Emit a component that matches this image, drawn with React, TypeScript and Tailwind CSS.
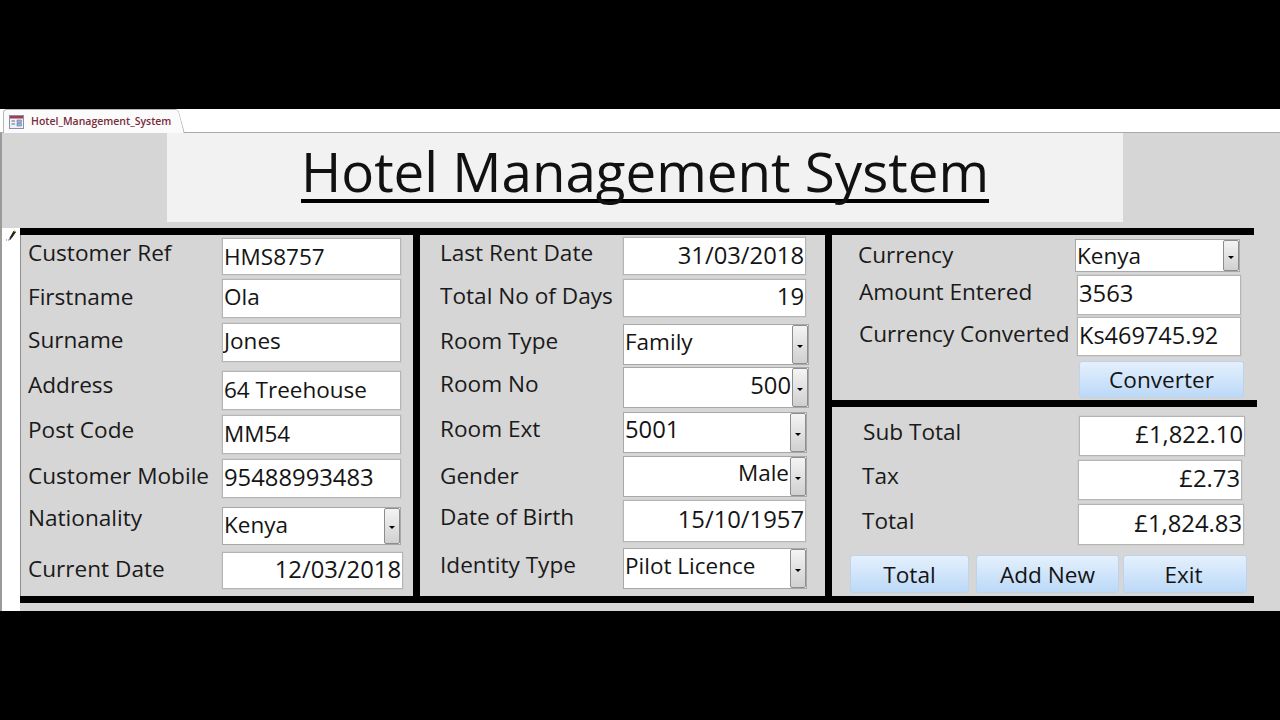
import type { ReactNode } from "react";
import clsx from "clsx";

const FONT = "[font-family:'Open_Sans','Noto_Sans',sans-serif]";

interface BoxProps {
  value: string;
  right?: boolean;
  className: string;
  textClass?: string;
}

function TextBox({ value, right, className }: BoxProps) {
  return (
    <div
      className={clsx(
        "flex items-center bg-white border border-[#b5b5b5] outline outline-[#cfcfcf] text-[#141414] whitespace-nowrap overflow-hidden px-[1px]",
        right && "justify-end",
        className
      )}
    >
      {value}
    </div>
  );
}

function Combo({ value, right, className, textClass }: BoxProps) {
  return (
    <div
      className={clsx(
        "flex items-stretch bg-white border border-[#a8a8a8] text-[#141414] whitespace-nowrap",
        className
      )}
    >
      <div className={clsx("flex-1 flex items-center px-[1px]", right && "justify-end", textClass)}>{value}</div>
      <div className="w-[16px] shrink-0 flex items-center justify-center border border-[#8d8d8d] rounded-[2px] bg-gradient-to-b from-[#f4f4f4] to-[#d0d0d0]">
        <div className="w-0 h-0 border-x-[3px] border-x-transparent border-t-[3px] border-t-black mt-[3px]" />
      </div>
    </div>
  );
}

function Label({ text, className }: { text: string; className: string }) {
  return <div className={clsx("text-[22.6px] leading-[30px] text-[#1a1a1a] whitespace-nowrap", className)}>{text}</div>;
}

function Row({ className, children }: { className: string; children: ReactNode }) {
  return <div className={clsx("flex items-start", className)}>{children}</div>;
}

function FormButton({ text, className }: { text: string; className: string }) {
  return (
    <div
      className={clsx(
        "flex items-center justify-center rounded-[3px] border border-[#bcd3ea] bg-gradient-to-b from-[#e4f0fd] to-[#bcd9f7] text-[22.6px] text-[#141414] pt-[1px]",
        className
      )}
    >
      {text}
    </div>
  );
}

function TabIcon() {
  return (
    <svg width="15" height="14" viewBox="0 0 15 14" className="shrink-0">
      <rect x="0.5" y="0.5" width="14" height="13" fill="#eef0f6" stroke="#8a8fa8" />
      <rect x="1" y="1" width="13" height="2.5" fill="#a63a4e" />
      <rect x="2.5" y="5.5" width="3.5" height="1" fill="#5a6a9a" />
      <rect x="2.5" y="8.5" width="3.5" height="1" fill="#5a6a9a" />
      <rect x="8" y="5" width="4.5" height="2.5" fill="#9db2d6" stroke="#5a6a9a" strokeWidth="0.5" />
      <rect x="8" y="8.5" width="4.5" height="2.5" fill="#9db2d6" stroke="#5a6a9a" strokeWidth="0.5" />
    </svg>
  );
}

function Pencil() {
  return (
    <svg width="12" height="12" viewBox="0 0 12 12" className="ml-[3px] mt-[1px]">
      <path d="M6 9.5 L4.8 10.6 L5.2 8.6 L9 2 L10.6 3 Z" fill="#222" stroke="#222" strokeWidth="1" />
      <path d="M9 2 L10.6 3" stroke="#c9a227" strokeWidth="1.4" />
      <path d="M1 11h0.8M3 11h0.8" stroke="#555" strokeWidth="1" />
    </svg>
  );
}

const TXT = "text-[22.5px]";
const NUM = "text-[23.8px]";

export default function App() {
  return (
    <div className={clsx("w-[1280px] h-[720px] bg-black flex flex-col overflow-hidden", FONT)}>
      <div className="h-[109px] shrink-0" />
      <div className="h-[502px] shrink-0 bg-[#d6d6d6] flex flex-col">
        {/* tab strip */}
        <div className="h-[24px] shrink-0 bg-white border-b border-[#a9a9a9] flex items-end pl-[3px]">
          <div className="relative h-[24px] w-[172px] bg-[#fbfbfb] border-t border-l border-[#b5b5b5] rounded-tl-[4px] flex items-center gap-[7px] pl-[5px] -mb-[1px]">
            <TabIcon />
            <span className="text-[10.5px] font-semibold text-[#7a2b3c] whitespace-nowrap">Hotel_Management_System</span>
            <svg width="10" height="24" viewBox="0 0 10 24" className="absolute left-full top-[-1px]">
              <path d="M0 0.5 C3 0.5 3 2 4 5 L9 23.5" fill="none" stroke="#b0b0b0" />
              <path d="M0 1 C3 1 3 2 4 5 L8.6 24 L0 24 Z" fill="#fbfbfb" />
            </svg>
          </div>
        </div>

        {/* title band */}
        <div className="h-[95px] shrink-0 flex items-stretch border-l-2 border-[#9a9a9a]">
          <div className="w-[165px] shrink-0" />
          <div className="w-[956px] h-[89px] bg-[#f2f2f2] flex justify-center">
            <span className="text-[54.7px] leading-[77px] h-[70px] text-[#111] border-b-[4px] border-black whitespace-nowrap">
              Hotel Management System
            </span>
          </div>
        </div>

        {/* form body */}
        <div className="flex-1 flex min-h-0">
          <div className="w-[20px] shrink-0 bg-white border-l-2 border-[#9a9a9a]">
            <Pencil />
          </div>
          <div className="w-[1234px] shrink-0 flex flex-col">
            <div className="h-[7px] bg-black" />
            <div className="h-[361px] flex border-l border-[#8f8f8f]">
              {/* customer column */}
              <div className="w-[392px] shrink-0 pl-[7px]">
                <Row className="mt-[3px]">
                  <Label text="Customer Ref" className="w-[194px]" />
                  <TextBox value="HMS8757" className={clsx("w-[179px] h-[37px]", TXT)} />
                </Row>
                <Row className="mt-[4px]">
                  <Label text="Firstname" className="w-[194px] mt-[3px]" />
                  <TextBox value="Ola" className={clsx("w-[179px] h-[39px] pb-[3px]", TXT)} />
                </Row>
                <Row className="mt-[5px]">
                  <Label text="Surname" className="w-[194px] mt-[2px]" />
                  <TextBox value="Jones" className={clsx("w-[179px] h-[39px] pb-[3px]", TXT)} />
                </Row>
                <Row className="mt-[9px]">
                  <Label text="Address" className="w-[194px] -mt-[1px]" />
                  <TextBox value="64 Treehouse" className={clsx("w-[179px] h-[39px] pb-[2px]", TXT)} />
                </Row>
                <Row className="mt-[5px]">
                  <Label text="Post Code" className="w-[194px]" />
                  <TextBox value="MM54" className={clsx("w-[179px] h-[39px] pb-[2px]", TXT)} />
                </Row>
                <Row className="mt-[5px]">
                  <Label text="Customer Mobile" className="w-[194px] mt-[2px]" />
                  <TextBox value="95488993483" className={clsx("w-[179px] h-[39px] pb-[2px]", NUM)} />
                </Row>
                <Row className="mt-[9px]">
                  <Label text="Nationality" className="w-[194px] -mt-[4px]" />
                  <Combo value="Kenya" textClass="pb-[2px]" className={clsx("w-[179px] h-[38px]", TXT)} />
                </Row>
                <Row className="mt-[7px]">
                  <Label text="Current Date" className="w-[194px] mt-[2px]" />
                  <TextBox value="12/03/2018" right className={clsx("w-[181px] h-[37px] pb-[2px]", NUM)} />
                </Row>
              </div>
              <div className="w-[7px] shrink-0 bg-black" />

              {/* booking column */}
              <div className="w-[405px] shrink-0 pl-[20px]">
                <Row className="mt-[2px]">
                  <Label text="Last Rent Date" className="w-[183px] mt-[1px]" />
                  <TextBox value="31/03/2018" right className={clsx("w-[183px] h-[38px] pb-[1px]", NUM)} />
                </Row>
                <Row className="mt-[4px]">
                  <Label text="Total No of Days" className="w-[183px] mt-[2px]" />
                  <TextBox value="19" right className={clsx("w-[183px] h-[38px] pb-[2px]", NUM)} />
                </Row>
                <Row className="mt-[7px]">
                  <Label text="Room Type" className="w-[183px] mt-[2px]" />
                  <Combo value="Family" textClass="pb-[5px]" className={clsx("w-[186px] h-[41px]", TXT)} />
                </Row>
                <Row className="mt-[2px]">
                  <Label text="Room No" className="w-[183px] mt-[2px]" />
                  <Combo value="500" right textClass="pb-[3px]" className={clsx("w-[186px] h-[41px]", NUM)} />
                </Row>
                <Row className="mt-[4px]">
                  <Label text="Room Ext" className="w-[183px] mt-[2px]" />
                  <Combo value="5001" textClass="pb-[6px]" className={clsx("w-[184px] h-[41px]", NUM)} />
                </Row>
                <Row className="mt-[3px]">
                  <Label text="Gender" className="w-[183px] mt-[5px]" />
                  <Combo value="Male" right textClass="pb-[7px]" className={clsx("w-[184px] h-[41px]", TXT)} />
                </Row>
                <Row className="mt-[3px]">
                  <Label text="Date of Birth" className="w-[183px] mt-[2px]" />
                  <TextBox value="15/10/1957" right className={clsx("w-[183px] h-[42px] pb-[2px]", NUM)} />
                </Row>
                <Row className="mt-[6px]">
                  <Label text="Identity Type" className="w-[183px] mt-[2px]" />
                  <Combo value="Pilot Licence" textClass="pb-[6px]" className={clsx("w-[184px] h-[41px]", TXT)} />
                </Row>
              </div>
              <div className="w-[7px] shrink-0 bg-black" />

              {/* currency and totals */}
              <div className="flex-1 flex flex-col min-w-0">
                <div className="h-[165px] shrink-0 pl-[26px]">
                  <Row className="mt-[4px]">
                    <Label text="Currency" className="w-[217px] mt-[1px]" />
                    <Combo value="Kenya" className={clsx("w-[165px] h-[33px]", TXT)} />
                  </Row>
                  <Row className="mt-[3px]">
                    <Label text="Amount Entered" className="w-[218px] pl-[1px] mt-[2px]" />
                    <TextBox value="3563" className={clsx("w-[164px] h-[40px] ml-[1px] pb-[3px]", NUM)} />
                  </Row>
                  <Row className="mt-[2px]">
                    <Label text="Currency Converted" className="w-[218px] pl-[1px] mt-[2px] text-[22.4px]" />
                    <TextBox value="Ks469745.92" className="w-[164px] h-[39px] ml-[1px] pb-[2px] text-[23.5px]" />
                  </Row>
                  <Row className="mt-[5px] pl-[221px]">
                    <FormButton text="Converter" className="w-[165px] h-[37px]" />
                  </Row>
                </div>
                <div className="h-[7px] shrink-0 bg-black w-[425px]" />
                <div className="flex-1 pl-[31px]">
                  <Row className="mt-[9px]">
                    <Label text="Sub Total" className="w-[216px] mt-[1px]" />
                    <TextBox value="£1,822.10" right className={clsx("w-[166px] h-[40px] pb-[2px]", NUM)} />
                  </Row>
                  <Row className="mt-[4px]">
                    <Label text="Tax" className="w-[215px] mt-[1px] -ml-[1px]" />
                    <TextBox value="£2.73" right className={clsx("w-[164px] h-[40px] ml-[1px] pb-[2px]", NUM)} />
                  </Row>
                  <Row className="mt-[4px]">
                    <Label text="Total" className="w-[215px] mt-[2px] -ml-[1px]" />
                    <TextBox value="£1,824.83" right className={clsx("w-[166px] h-[41px] ml-[1px] pb-[2px]", NUM)} />
                  </Row>
                  <div className="flex mt-[10px] -ml-[13px]">
                    <FormButton text="Total" className="w-[119px] h-[38px]" />
                    <FormButton text="Add New" className="w-[143px] h-[38px] ml-[7px]" />
                    <FormButton text="Exit" className="w-[124px] h-[38px] ml-[4px] pr-[3px]" />
                  </div>
                </div>
              </div>
            </div>
            <div className="h-[7px] bg-black" />
          </div>
        </div>
      </div>
    </div>
  );
}
